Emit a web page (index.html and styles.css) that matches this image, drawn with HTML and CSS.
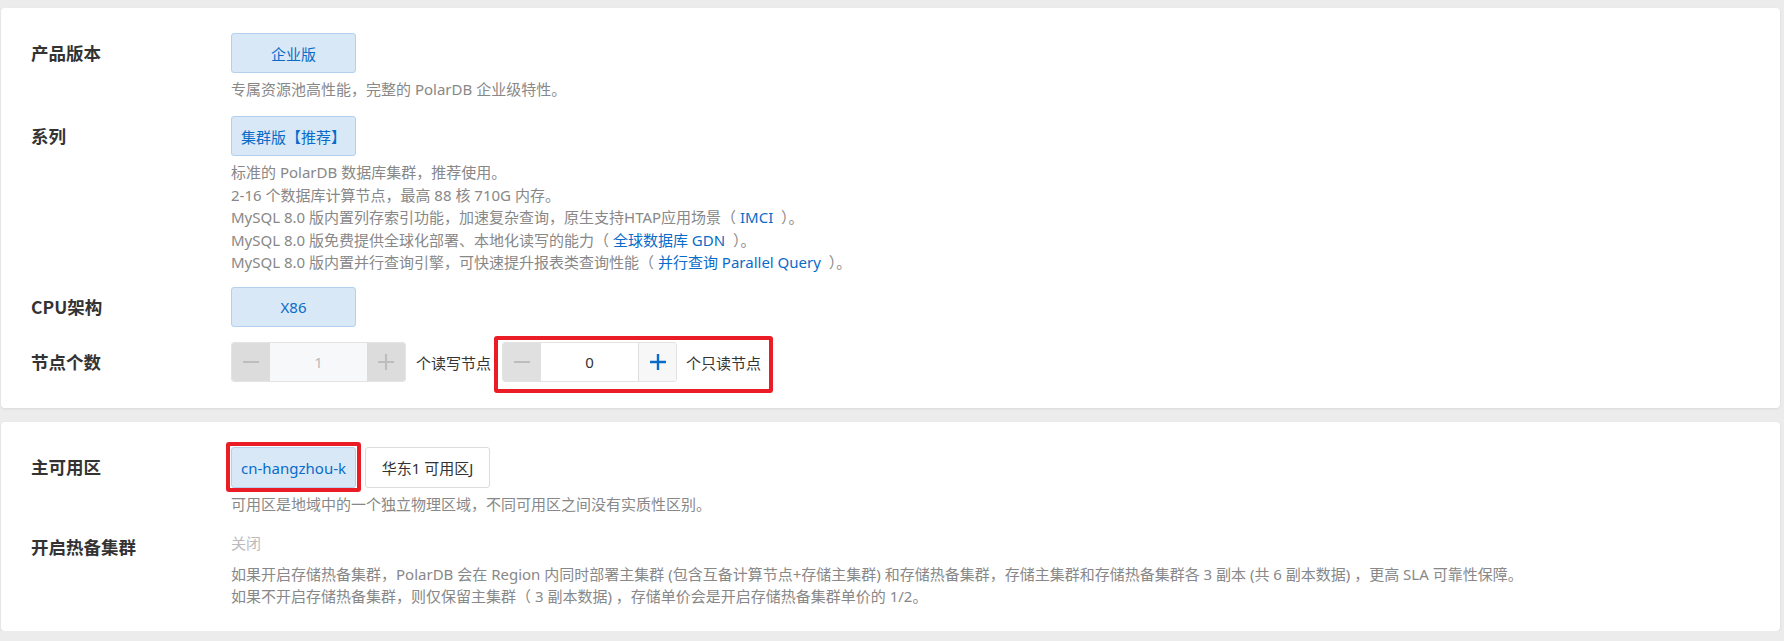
FILE: index.html
```html
<!DOCTYPE html>
<html lang="zh-CN">
<head>
<meta charset="utf-8">
<title>PolarDB 配置</title>
<link rel="stylesheet" href="styles.css">
</head>
<body>
<div class="page">
  <section class="card">
    <div class="row">
      <div class="label">产品版本</div>
      <div class="content">
        <div class="options"><span class="opt selected">企业版</span></div>
        <p class="desc">专属资源池高性能，完整的 PolarDB 企业级特性。</p>
      </div>
    </div>
    <div class="row row-series">
      <div class="label">系列</div>
      <div class="content">
        <div class="options"><span class="opt selected">集群版【推荐】</span></div>
        <p class="desc">标准的 PolarDB 数据库集群，推荐使用。<br>2-16 个数据库计算节点，最高 88 核 710G 内存。<br>MySQL 8.0 版内置列存索引功能，加速复杂查询，原生支持HTAP应用场景（ <a class="link">IMCI</a> &nbsp;）。<br>MySQL 8.0 版免费提供全球化部署、本地化读写的能力（ <a class="link">全球数据库 GDN</a> &nbsp;）。<br>MySQL 8.0 版内置并行查询引擎，可快速提升报表类查询性能（ <a class="link">并行查询 Parallel Query</a> &nbsp;）。</p>
      </div>
    </div>
    <div class="row">
      <div class="label">CPU架构</div>
      <div class="content">
        <div class="options"><span class="opt selected">X86</span></div>
      </div>
    </div>
    <div class="row row-last">
      <div class="label">节点个数</div>
      <div class="content">
        <div class="steppers">
          <div class="stepper disabled">
            <span class="step-btn"><svg viewBox="0 0 18 18" width="18" height="18"><path d="M1 9h16" stroke="currentColor" stroke-width="2.2"/></svg></span>
            <span class="step-val">1</span>
            <span class="step-btn"><svg viewBox="0 0 18 18" width="18" height="18"><path d="M1 9h16M9 1v16" stroke="currentColor" stroke-width="2.2"/></svg></span>
          </div>
          <span class="unit">个读写节点</span>
          <div class="mark-group">
            <div class="stepper">
              <span class="step-btn minus-off"><svg viewBox="0 0 18 18" width="18" height="18"><path d="M1 9h16" stroke="currentColor" stroke-width="2.2"/></svg></span>
              <span class="step-val active">0</span>
              <span class="step-btn plus-on"><svg viewBox="0 0 18 18" width="18" height="18"><path d="M1 9h16M9 1v16" stroke="currentColor" stroke-width="2.4"/></svg></span>
            </div>
            <span class="unit unit-ro">个只读节点</span>
            <span class="red-mark mark-node"></span>
          </div>
        </div>
      </div>
    </div>
  </section>

  <section class="card card-zone">
    <div class="row row-zone">
      <div class="label">主可用区</div>
      <div class="content">
        <div class="options">
          <span class="mark-group"><span class="opt selected">cn-hangzhou-k</span><span class="red-mark mark-zone"></span></span>
          <span class="opt">华东1 可用区J</span>
        </div>
        <p class="desc">可用区是地域中的一个独立物理区域，不同可用区之间没有实质性区别。</p>
      </div>
    </div>
    <div class="row row-last row-hot">
      <div class="label">开启热备集群</div>
      <div class="content">
        <div class="off-text">关闭</div>
        <p class="desc desc-hot">如果开启存储热备集群，PolarDB 会在 Region 内同时部署主集群 (包含互备计算节点+存储主集群) 和存储热备集群，存储主集群和存储热备集群各 3 副本 (共 6 副本数据) ，更高 SLA 可靠性保障。<br>如果不开启存储热备集群，则仅保留主集群（ 3 副本数据) ，存储单价会是开启存储热备集群单价的 1/2。</p>
      </div>
    </div>
  </section>
</div>
</body>
</html>
```

FILE: styles.css
```css
* { box-sizing: border-box; }
html, body {
  margin: 0;
  padding: 0;
  background: #ececec;
  font-family: "Noto Sans", "Noto Sans CJK SC", sans-serif;
  color: #333;
}
.page {
  padding: 8px 4px 0 1px;
  display: flex;
  flex-direction: column;
  gap: 14px;
}
.card {
  background: #fff;
  border-radius: 4px;
  box-shadow: 0 1px 3px rgba(0,0,0,0.08);
  padding: 25px 30px 26px 30px;
}
.card-zone { padding-bottom: 23px; }
.row {
  display: flex;
  align-items: flex-start;
  margin-bottom: 15px;
}
.row-series { margin-bottom: 14px; }
.row:first-child { margin-bottom: 16px; }
.row-last { margin-bottom: 0; }
.row-zone { margin-bottom: 30px; }
.label {
  width: 200px;
  flex: none;
  font-size: 17.5px;
  font-weight: 700;
  line-height: 40px;
  color: #333;
  font-family: "Noto Sans CJK SC", sans-serif;
}
.row-hot .label { line-height: 30px; }
.content { flex: 1; min-width: 0; }
.options { display: flex; gap: 9px; }
.opt {
  display: flex;
  align-items: center;
  justify-content: center;
  width: 125px;
  height: 40px;
  border: 1px solid #dcdcdc;
  border-radius: 3px;
  background: #fff;
  font-size: 15px;
  color: #333;
}
.opt.selected {
  background: #d9e8f6;
  border-color: #b3d1ee;
  color: #0a6cc9;
}
.row-zone .opt { height: 41px; }
.desc {
  margin: 5px 0 0;
  font-size: 15px;
  line-height: 22.4px;
  color: #888;
}
.desc-hot { margin-top: 9px; }
.link { color: #0a6cc9; text-decoration: none; }
.off-text {
  font-size: 15px;
  line-height: 22px;
  color: #bbb;
}
.steppers {
  display: flex;
  align-items: center;
}
.stepper {
  display: flex;
  height: 40px;
  width: 175px;
  border: 1px solid #e3e3e3;
  border-radius: 3px;
  overflow: hidden;
  background: #fff;
}
.step-btn {
  width: 38px;
  flex: none;
  display: flex;
  align-items: center;
  justify-content: center;
  background: #dcdcdc;
  color: #bdbdbd;
}
.step-val {
  flex: 1;
  display: flex;
  align-items: center;
  justify-content: center;
  background: #f7f8fa;
  color: #bbb;
  font-size: 15px;
}
.step-val.active { background: #fff; color: #333; }
.minus-off { background: #e0e0e0; color: #bdbdbd; }
.plus-on { background: #f7f7f7; color: #0a6cc9; border-left: 1px solid #dedede; }
.unit {
  font-size: 15px;
  color: #333;
  margin-left: 10px;
  white-space: nowrap;
}
.mark-group {
  position: relative;
  display: flex;
  align-items: center;
  margin-left: 11px;
}
.options .mark-group { margin-left: 0; }
.unit-ro { margin-left: 9px; }
.red-mark {
  position: absolute;
  border: 4px solid #ea1c26;
  border-radius: 3px;
  pointer-events: none;
}
.mark-node { left: -8px; right: -12px; top: -6px; bottom: -11px; }
.mark-zone { left: -5px; right: -5px; top: -5px; bottom: -4px; }
```
